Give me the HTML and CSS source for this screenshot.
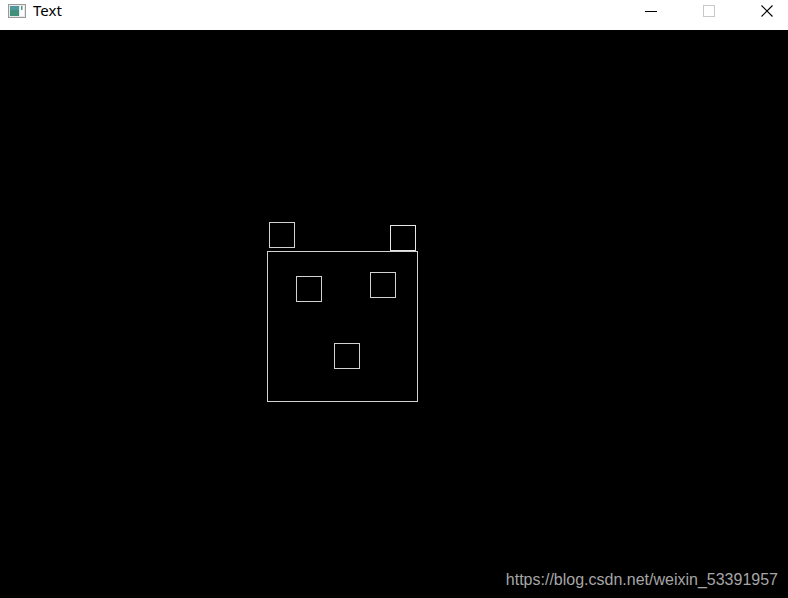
FILE: index.html
```html
<!DOCTYPE html>
<html>
<head>
<meta charset="utf-8">
<link rel="stylesheet" href="styles.css">
</head>
<body>
<div class="window">
  <div class="titlebar">
    <div class="title">
      <svg class="app-icon" width="18" height="14" viewBox="0 0 18 14">
        <rect x="0.5" y="0.5" width="17" height="13" fill="#e8e8e8" stroke="#9a9a9a"/>
        <rect x="2" y="2" width="9" height="10" fill="#3f8f7a"/>
        <rect x="2" y="2" width="9" height="4" fill="#5a9ab0" opacity="0.7"/>
        <rect x="12" y="2" width="4" height="10" fill="#ffffff"/>
        <rect x="13" y="2" width="1.5" height="4" fill="#4a9a7a"/>
      </svg>
      <span class="title-text">Text</span>
    </div>
    <div class="controls">
      <div class="ctl">
        <svg width="12" height="12" viewBox="0 0 12 12"><line x1="0" y1="6.5" x2="12" y2="6.5" stroke="#000" stroke-width="1"/></svg>
      </div>
      <div class="ctl">
        <svg width="12" height="12" viewBox="0 0 12 12"><rect x="0.5" y="0.5" width="11" height="11" fill="none" stroke="#c8c8c8"/></svg>
      </div>
      <div class="ctl">
        <svg width="12" height="12" viewBox="0 0 12 12"><path d="M0.5 0.5 L11.5 11.5 M11.5 0.5 L0.5 11.5" stroke="#000" stroke-width="1.1" fill="none"/></svg>
      </div>
    </div>
  </div>
  <div class="canvas">
    <div class="shape head"></div>
    <div class="shape ear ear-left"></div>
    <div class="shape ear ear-right"></div>
    <div class="shape eye eye-left"></div>
    <div class="shape eye eye-right"></div>
    <div class="shape nose"></div>
    <div class="watermark">https://blog.csdn.net/weixin_53391957</div>
  </div>
</div>
</body>
</html>
```
FILE: styles.css
```css
html, body {
  margin: 0;
  padding: 0;
  background: #000;
}
.window {
  width: 788px;
  height: 598px;
  display: flex;
  flex-direction: column;
  overflow: hidden;
}
.titlebar {
  height: 30px;
  flex: 0 0 30px;
  background: #fff;
  display: flex;
  align-items: flex-start;
  justify-content: space-between;
}
.title {
  display: flex;
  align-items: center;
  height: 20px;
  padding-left: 8px;
  gap: 7px;
}
.app-icon {
  display: block;
  margin-top: 2px;
}
.title-text {
  font-family: "Noto Sans", "Liberation Sans", sans-serif;
  font-size: 15px;
  color: #000;
  line-height: 20px;
}
.controls {
  display: flex;
  padding-right: 15px;
}
.ctl {
  width: 58px;
  height: 21px;
  display: flex;
  align-items: center;
  justify-content: flex-end;
}
.ctl svg {
  display: block;
}
.canvas {
  position: relative;
  flex: 1;
  background: #000;
}
.shape {
  position: absolute;
  box-sizing: border-box;
  border: 1px solid #d2d2d2;
}
.head {
  left: 267px;
  top: 221px;
  width: 151px;
  height: 151px;
}
.ear, .eye, .nose {
  width: 26px;
  height: 26px;
}
.ear-left { left: 269px; top: 192px; }
.ear-right { left: 390px; top: 195px; border-color: #e6e6e6; }
.eye-left { left: 296px; top: 246px; }
.eye-right { left: 370px; top: 242px; }
.nose { left: 334px; top: 313px; }
.watermark {
  position: absolute;
  right: 10px;
  bottom: 9px;
  font-family: "Liberation Sans", Arial, sans-serif;
  font-size: 16px;
  color: #a6a6a6;
  white-space: nowrap;
}
```
